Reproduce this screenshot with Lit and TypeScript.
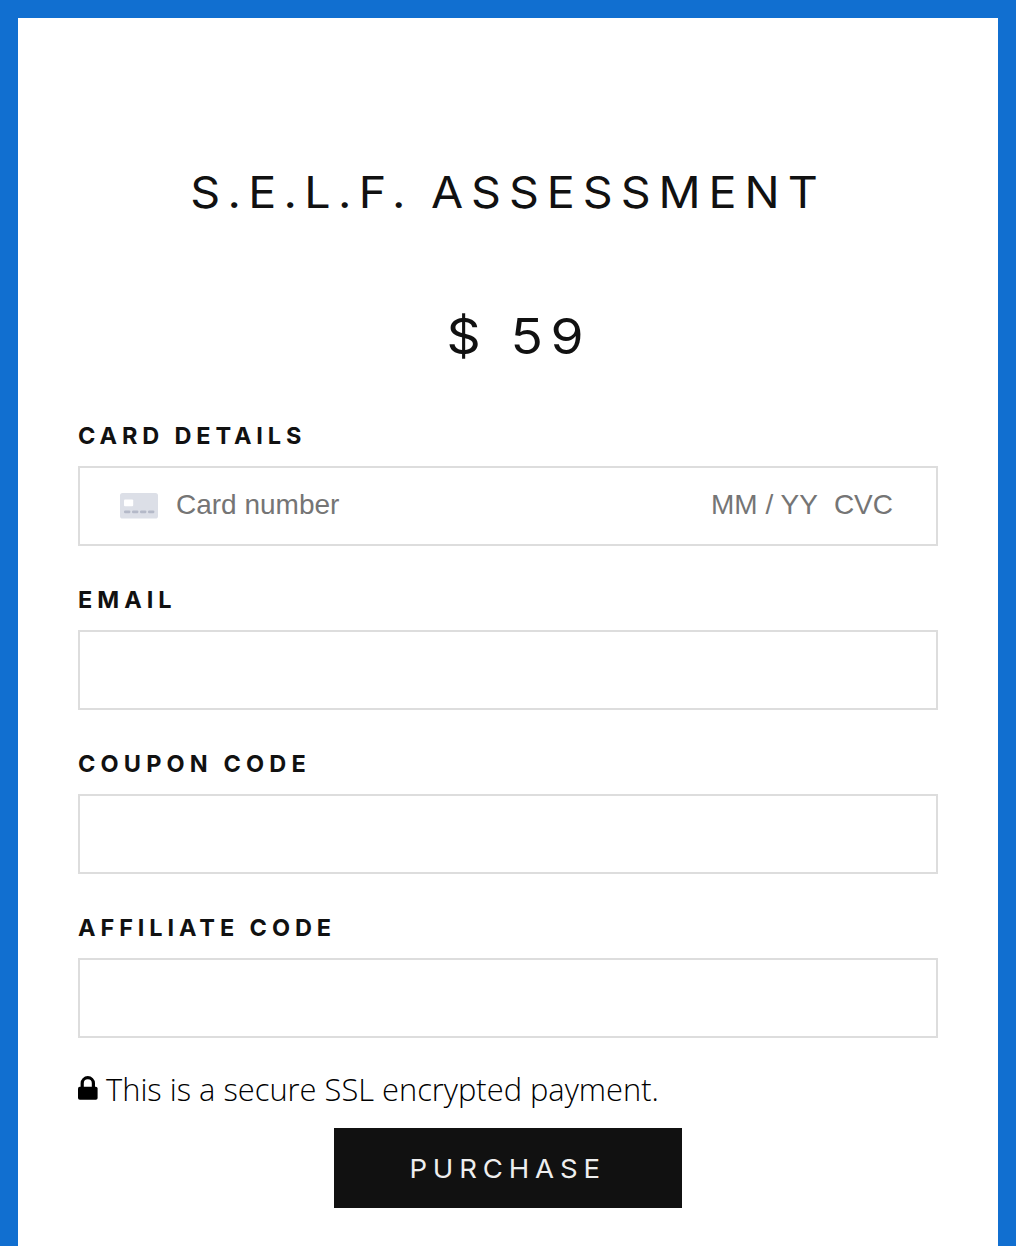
import { LitElement, html, css, svg } from "lit";
import { customElement } from "lit/decorators.js";
import { styleMap } from "lit/directives/style-map.js";

const cardIcon = html`<svg class="card-icon" width="38" height="26" viewBox="0 0 38 26" aria-hidden="true">
  <rect width="38" height="25.5" rx="2.6" fill="#dcdfe7" />
  <rect x="4" y="6.5" width="9.2" height="6.7" rx="1" fill="#fff" />
  ${[4, 12, 20, 28].map((x) => svg`<rect x=${x} y="17.4" width="6.4" height="2.8" rx="1.2" fill="#b4b9c8" />`)}
</svg>`;

const lockIcon = html`<svg class="lock-icon" width="20" height="24" viewBox="0 0 20 24" aria-hidden="true">
  <path d="M4.2 12V7.3a5.6 5.6 0 0 1 11.2 0V12" fill="none" stroke="#000" stroke-width="3.2" />
  <rect x="0" y="10.8" width="19.6" height="13" rx="1.8" fill="#000" />
</svg>`;

@customElement("app-root")
export class AppRoot extends LitElement {
  static styles = css`
    :host {
      display: block;
      height: 1246px;
      overflow: hidden;
      background: #116fd0;
      color: #111;
      font-family: Inter, "Liberation Sans", sans-serif;
    }
    .page {
      box-sizing: border-box;
      height: 1228px;
      margin: 18px 18px 0;
      padding: 144px 60px 0;
      background: #fff;
      display: flex;
      flex-direction: column;
    }
    .title, .price {
      margin: 0;
      font-weight: 400;
      text-align: center;
      white-space: nowrap;
    }
    .title {
      font-size: 44px;
      line-height: 60px;
      letter-spacing: 6.9px;
      word-spacing: -2.2px;
      transform: scaleX(1.06);
    }
    .wide { letter-spacing: 7.5px; }
    .price {
      margin-top: 83px;
      padding-left: 20px;
      font-size: 49px;
      line-height: 64px;
      letter-spacing: 7px;
      word-spacing: -0.5px;
      transform: scaleX(1.09);
    }
    .fields { margin-top: 49px; display: flex; flex-direction: column; gap: 36px; }
    .field { display: flex; flex-direction: column; }
    .label {
      height: 36px;
      margin-bottom: 12px;
      line-height: 36px;
      font-size: 23.5px;
      font-weight: 700;
      white-space: nowrap;
    }
    .box {
      box-sizing: border-box;
      height: 80px;
      border: 2px solid #ddd;
      padding: 0 43px 0 40px;
      display: flex;
      align-items: center;
      color: #757575;
      font: 28px/36px "Liberation Sans", Arial, sans-serif;
      white-space: pre;
    }
    .box span { margin-bottom: 3px; }
    .card-icon { margin-right: 18px; }
    .spacer { flex: 1; }
    .box .cvc { margin-left: 16px; }
    .secure {
      margin-top: 29px;
      height: 42px;
      display: flex;
      align-items: center;
      color: #000;
      font: 300 30.85px/42px "Open Sans", sans-serif;
      white-space: nowrap;
    }
    .secure span { margin-top: 2px; }
    .lock-icon { margin-right: 8px; }
    .buy {
      align-self: center;
      margin-top: 19px;
      width: 348px;
      height: 80px;
      padding: 2px 0 0;
      border: 0;
      background: #111;
      color: #eee;
      font: 400 26px/78px Inter, sans-serif;
      letter-spacing: 5.5px;
    }
    .buy span { display: inline-block; transform: scaleX(1.06); }
  `;

  private field(label: string, tracking: number, content: unknown = "") {
    return html`<div class="field"><div class="label" style=${styleMap({ letterSpacing: `${tracking}px` })}>${label}</div><div class="box">${content}</div></div>`;
  }

  render() {
    return html`<main class="page">
      <h1 class="title">S.E.L.F. <span class="wide">ASSESSMENT</span></h1>
      <p class="price">$ 59</p>
      <div class="fields">
        ${this.field("CARD DETAILS", 4.85, html`${cardIcon}<span>Card number</span><span class="spacer"></span><span>MM / YY</span><span class="cvc">CVC</span>`)}
        ${this.field("EMAIL", 5)}
        ${this.field("COUPON CODE", 5.15)}
        ${this.field("AFFILIATE CODE", 4.9)}
      </div>
      <div class="secure">${lockIcon}<span>This is a secure SSL encrypted payment.</span></div>
      <button class="buy"><span>PURCHASE</span></button>
    </main>`;
  }
}
